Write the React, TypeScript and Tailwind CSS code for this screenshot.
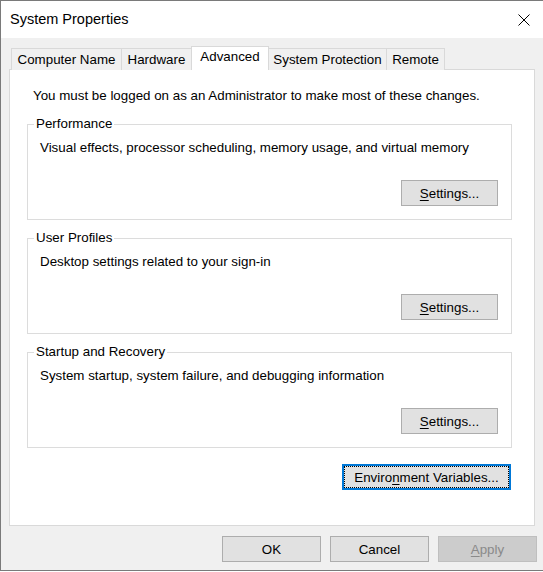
import React from "react";

const Btn = ({
  children,
  className = "",
  disabled = false,
}: {
  children: React.ReactNode;
  className?: string;
  disabled?: boolean;
}) => (
  <button
    className={
      "flex h-[26px] items-center justify-center border pt-[2px] text-[13.35px] leading-none " +
      (disabled
        ? "border-[#bfbfbf] bg-[#cccccc] text-[#8a8a8a]"
        : "border-[#adadad] bg-[#e1e1e1] text-black") +
      " " +
      className
    }
    disabled={disabled}
    type="button"
  >
    {children}
  </button>
);

const Group = ({ title, text }: { title: string; text: string }) => (
  <fieldset className="ml-[17px] mr-[22px] flex h-[104px] flex-col border border-[#dcdcdc] pl-[12px] pr-[13px]">
    <legend className="ml-[-6px] px-[2px] text-[13.35px] leading-[16px] text-black">
      {title}
    </legend>
    <p className="mt-[8px] text-[13.35px] leading-[16px] text-black">{text}</p>
    <div className="mt-[24px] flex justify-end">
      <Btn className="w-[97px]">
        <span>
          <span className="underline underline-offset-2">S</span>ettings...
        </span>
      </Btn>
    </div>
  </fieldset>
);

const tabs = [
  { label: "Computer Name", w: "w-[111px]" },
  { label: "Hardware", w: "w-[71px]" },
  { label: "Advanced", w: "w-[78px]", active: true },
  { label: "System Protection", w: "w-[119px]" },
  { label: "Remote", w: "w-[59px]" },
];

export default function App() {
  return (
    <div className="h-[572px] w-[543px] bg-white font-['Liberation_Sans',Arial,sans-serif]">
      <div className="flex h-[571px] w-[543px] flex-col border-b border-l border-t border-[#7a7a7a] bg-[#f0f0f0]">
        {/* title bar */}
        <div className="flex h-[37px] shrink-0 items-center justify-between bg-white pl-[9px] pr-[13px]">
          <span className="text-[14.5px] text-black">System Properties</span>
          <svg width="12" height="12" viewBox="0 0 12 12" className="mt-[1px]">
            <path d="M0.5 0.5 L11.5 11.5 M11.5 0.5 L0.5 11.5" stroke="#000" strokeWidth="1" fill="none" />
          </svg>
        </div>

        <div className="flex flex-1 flex-col pt-[8px]">
          {/* tabs */}
          <div className="relative z-10 -mb-px flex h-[24px] items-end pl-[10px]">
            {tabs.map((t, i) => (
              <div
                key={t.label}
                className={
                  "flex items-center justify-center border-l border-r border-t border-[#d9d9d9] text-[13.35px] leading-none text-black " +
                  t.w +
                  (i > 0 ? " -ml-px" : "") +
                  (t.active ? " relative h-[24px] bg-white pb-[3px]" : " h-[22px] bg-[#f0f0f0]")
                }
              >
                {t.label}
              </div>
            ))}
          </div>

          {/* panel */}
          <div className="mx-[8px] flex h-[457px] flex-col border border-[#d9d9d9] bg-white">
            <p className="ml-[23px] mt-[18px] text-[13.35px] leading-[16px] text-black">
              You must be logged on as an Administrator to make most of these changes.
            </p>
            <div className="mt-[12px] flex flex-col gap-[10px]">
              <Group
                title="Performance"
                text="Visual effects, processor scheduling, memory usage, and virtual memory"
              />
              <Group title="User Profiles" text="Desktop settings related to your sign-in" />
              <Group
                title="Startup and Recovery"
                text="System startup, system failure, and debugging information"
              />
            </div>
            <div className="mr-[23px] mt-[16px] flex justify-end">
              <button
                type="button"
                className="h-[26px] w-[169px] border-2 border-[#0078d7] bg-[#e1e1e1] p-0 text-[13.35px] leading-none text-black"
              >
                <span className="flex h-full w-full items-center justify-center border border-dotted border-black pt-px">
                  <span>
                    Enviro<span className="underline underline-offset-2">n</span>ment Variables...
                  </span>
                </span>
              </button>
            </div>
          </div>

          {/* footer buttons */}
          <div className="mt-[10px] flex justify-end gap-[9px] pr-[6px]">
            <Btn className="w-[99px]">OK</Btn>
            <Btn className="w-[99px]">Cancel</Btn>
            <Btn className="w-[99px]" disabled>
              <span>
                <span className="underline underline-offset-2">A</span>pply
              </span>
            </Btn>
          </div>
        </div>
      </div>
    </div>
  );
}
